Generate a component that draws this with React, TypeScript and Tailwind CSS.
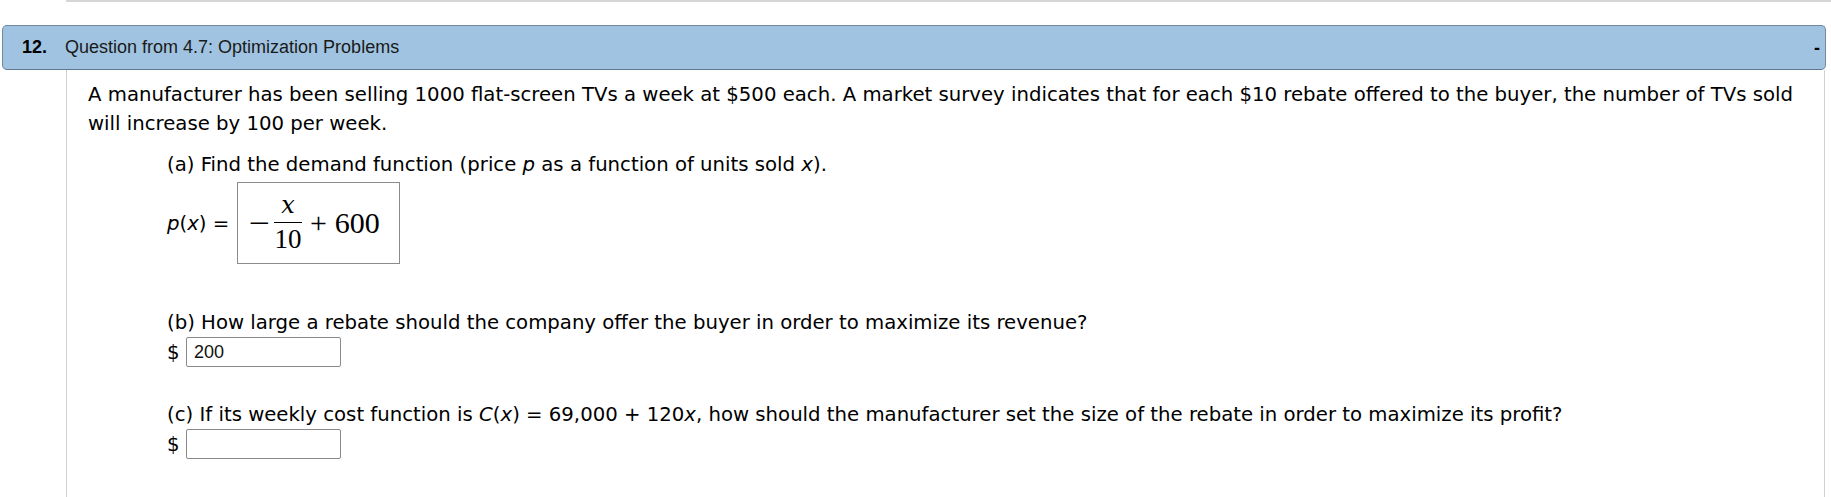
import React from 'react'

function MoneyInput({ value }: { value?: string }) {
  return (
    <div className="flex items-center h-[30px]">
      <span className="w-[19px]">$</span>
      <div className="w-[155px] h-[30px] border border-[#8a8a8a] rounded-[2px] flex items-center pl-[7px] font-['Liberation_Sans',Arial,sans-serif] text-[18px] text-[#111]">
        {value}
      </div>
    </div>
  )
}

export default function App() {
  return (
    <div className="w-[1831px] h-[497px] bg-white overflow-hidden relative">
      {/* top rule */}
      <div className="ml-[66px] h-[2px] bg-[#d6d6d6]" />

      {/* question header */}
      <div className="mt-[23px] ml-[2px] w-[1824px] h-[45px] flex items-center bg-[#9fc3e0] border border-[#7089a0] border-b-[#5d778e] rounded-[5px] pl-[19px] pr-[5px] font-['Liberation_Sans',Arial,sans-serif] text-[18px]">
        <span className="w-[43px] font-bold text-black">12.</span>
        <span className="text-[#1a1a1a]">Question from 4.7: Optimization Problems</span>
        <span className="ml-auto font-bold text-black leading-none">-</span>
      </div>

      {/* question body */}
      <div className="ml-[66px] w-[1759px] h-[430px] border-l border-r border-[#d0d0d0] pl-[21px] pt-[10px] font-['DejaVu_Sans',Verdana,sans-serif] text-[19.7px] leading-[29px] text-black">
        <p className="w-[1715px]">
          A manufacturer has been selling 1000 flat-screen TVs a week at $500 each. A market survey indicates that for each $10 rebate offered to the buyer, the number of TVs sold will increase by 100 per week.
        </p>

        <div className="ml-[79px]">
          <p className="mt-[12px]">
            (a) Find the demand function (price <i>p</i> as a function of units sold <i>x</i>).
          </p>

          <div className="mt-[3px] flex items-center h-[82px]">
            <span className="w-[70px]">
              <i>p</i>(<i>x</i>) =
            </span>
            <div className="w-[163px] h-[82px] border border-[#8c8c8c] flex items-center pl-[13px] font-['Liberation_Serif','Times_New_Roman',serif] text-[30px] leading-none">
              <span className="mr-[4px] scale-x-125">−</span>
              <span className="inline-flex flex-col items-center text-[27px] mx-[2px]">
                <span className="pb-[5px] italic font-['DejaVu_Serif',serif] text-[24px]">x</span>
                <span className="border-t border-black w-[28px] pt-[3px] text-center">10</span>
              </span>
              <span className="ml-[6px]">+</span>
              <span className="ml-[8px]">600</span>
            </div>
          </div>

          <p className="mt-[44px]">
            (b) How large a rebate should the company offer the buyer in order to maximize its revenue?
          </p>
          <MoneyInput value="200" />

          <p className="mt-[33px]">
            (c) If its weekly cost function is <i>C</i>(<i>x</i>) = 69,000 + 120<i>x</i>, how should the manufacturer set the size of the rebate in order to maximize its profit?
          </p>
          <MoneyInput />
        </div>
      </div>
    </div>
  )
}
